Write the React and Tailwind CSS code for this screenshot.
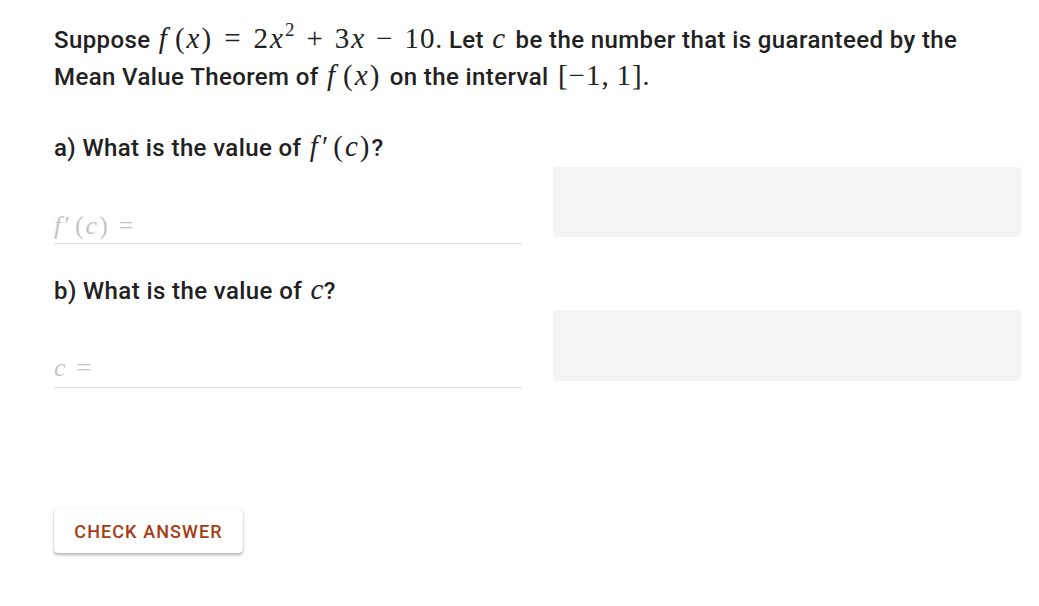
import React from "react";

const serif = { fontFamily: '"Liberation Serif", "DejaVu Serif", serif' };

const I = ({ children, className = "" }) => (
  <span className={"italic font-normal " + className} style={serif}>
    {children}
  </span>
);
const R = ({ children, className = "" }) => (
  <span className={"not-italic font-normal " + className} style={serif}>
    {children}
  </span>
);

const Math = ({ children, className = "text-[29px] tracking-[2px] mx-[2px]" }) => (
  <span className={"inline-block whitespace-nowrap leading-none " + className}>{children}</span>
);

export default function App() {
  return (
    <div
      className="bg-white w-[1039px] h-[606px] pl-[54px] pt-[22px] text-[#212121]"
      style={{ fontFamily: 'Roboto, "Liberation Sans", sans-serif' }}
    >
      <p className="text-[24px] leading-[37px] font-medium tracking-[0.4px] w-[930px]">
        Suppose{" "}
        <Math className="text-[29px] tracking-[2px] ml-[2px]">
          <I className="mr-[6px]">f</I>
          <R>(</R>
          <I>x</I>
          <R>)</R>
          <R className="mx-[11px]">=</R>
          <R>2</R>
          <I>x</I>
          <span className="text-[19px] not-italic font-normal relative top-[-12px]" style={serif}>2</span>
          <R className="mx-[10px]">+</R>
          <R>3</R>
          <I>x</I>
          <R className="mx-[10px]">−</R>
          <R className="tracking-[1px]">10</R>
        </Math>
        . Let{" "}
        <Math>
          <I>c</I>
        </Math>{" "}
        be the number that is guaranteed by the Mean Value Theorem of{" "}
        <Math>
          <I className="mr-[6px]">f</I>
          <R>(</R>
          <I>x</I>
          <R>)</R>
        </Math>{" "}
        on the interval{" "}
        <Math className="text-[29px] tracking-[1px] ml-[3px]">
          <R>[−1,&thinsp;1]</R>
        </Math>
        .
      </p>

      <h2 className="mt-[35px] text-[24px] leading-[34px] font-medium tracking-[0.4px]">
        a) What is the value of{" "}
        <Math className="text-[29px] tracking-[2px] ml-[2px]">
          <I className="mr-[2px]">f</I>
          <R className="mr-[3px]">′</R>
          <R>(</R>
          <I>c</I>
          <R>)</R>
        </Math>
        ?
      </h2>
      <div className="mt-[2px] flex gap-[31px] items-start">
        <div className="w-[468px] h-[77px] border-b border-[#e0e0e0] flex items-end pb-[4px] text-[#c4c4c4]">
          <Math className="text-[26px] tracking-[2px]">
            <I className="mr-[1px]">f</I>
            <R className="mr-[3px]">′</R>
            <R>(</R>
            <I>c</I>
            <R>)</R>
            <R className="ml-[9px]">=</R>
          </Math>
        </div>
        <div className="w-[468px] h-[70px] rounded-[4px] bg-[#f4f4f4]" />
      </div>

      <h2 className="mt-[30px] text-[24px] leading-[34px] font-medium tracking-[0.4px]">
        b) What is the value of{" "}
        <Math className="text-[29px] ml-[2px]">
          <I>c</I>
        </Math>
        ?
      </h2>
      <div className="mt-[2px] flex gap-[31px] items-start">
        <div className="w-[468px] h-[78px] border-b border-[#e0e0e0] flex items-end pb-[6px] text-[#c4c4c4]">
          <Math className="text-[26px] tracking-[2px]">
            <I>c</I>
            <R className="ml-[9px]">=</R>
          </Math>
        </div>
        <div className="w-[468px] h-[71px] rounded-[4px] bg-[#f4f4f4]" />
      </div>

      <button className="mt-[121px] w-[189px] h-[44px] rounded-[4px] bg-white text-[#a63c14] text-[18px] font-medium tracking-[1.1px] shadow-[0_2px_3px_rgba(0,0,0,0.3),0_0_1px_rgba(0,0,0,0.15)]">
        CHECK ANSWER
      </button>
    </div>
  );
}
